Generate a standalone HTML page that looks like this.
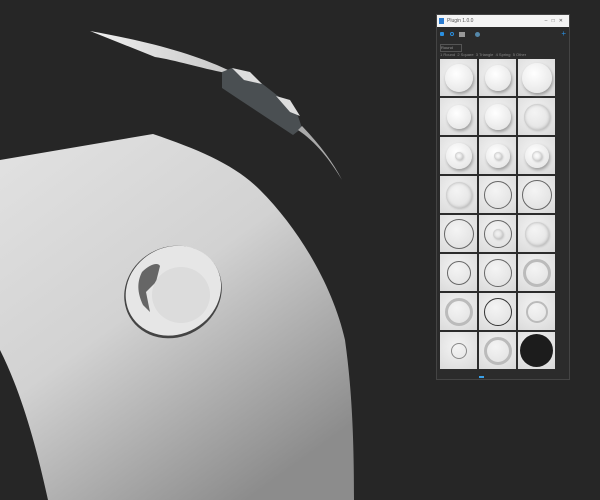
<html><head><style>
body{margin:0;width:600px;height:500px;background:#262626;overflow:hidden;position:relative;font-family:"Liberation Sans",sans-serif}
.p{position:absolute;left:436px;top:14px;width:134px;height:366px;background:#2b2b2b;border:1px solid #444;box-sizing:border-box}
.t{height:12px;background:#f4f4f4;font-size:5px;color:#555;line-height:12px;padding-left:10px;position:relative}
.t b{position:absolute;left:2px;top:3px;width:5px;height:6px;background:#2a7bd0}
.c{position:absolute;width:37px;height:37px;background:radial-gradient(circle at 45% 40%,#f4f4f4,#d8d8d8)}
.c i{position:absolute;border-radius:50%}
</style></head><body>
<svg width="600" height="500" style="position:absolute;left:0;top:0">
<defs><linearGradient id="g" x1="0" y1="0" x2=".7" y2="1"><stop offset="0" stop-color="#e2e2e2"/><stop offset=".5" stop-color="#d2d2d2"/><stop offset="1" stop-color="#8c8c8c"/></linearGradient>
<linearGradient id="s" x1="0" y1="0" x2="1" y2="0"><stop offset="0" stop-color="#f0f0f0"/><stop offset="1" stop-color="#c8c8c8"/></linearGradient></defs>
<path d="M0 160 L153 134 C200 150 235 165 260 190 C300 230 333 287 345 340 C352 390 354 440 354 500 L48 500 C35 440 20 390 0 350 Z" fill="url(#g)"/>
<path d="M90 31 C140 40 190 52 228 70 L226 73 C200 68 175 60 155 57 Z" fill="url(#s)"/>
<path d="M222 72 L232 68 L260 82 L296 110 L302 128 L293 135 L240 100 L222 88 Z" fill="#4a4f52"/>
<path d="M232 68 L250 72 L262 84 L244 80 Z M276 96 L290 100 L300 116 L290 112 Z" fill="#ddd"/>
<path d="M302 126 C320 145 333 162 342 180 C330 160 316 142 298 130 Z" fill="#aaa"/>
<ellipse cx="173" cy="292" rx="50" ry="45" fill="#444" transform="rotate(-30 173 292)"/>
<ellipse cx="174" cy="291" rx="49" ry="43.5" fill="#e6e6e6" transform="rotate(-30 173 292)"/>
<path d="M142 272 C150 264 158 262 160 266 L156 282 L146 292 L150 312 L143 305 C137 292 137 282 142 272 Z" fill="#666"/>
<ellipse cx="181" cy="295" rx="29" ry="28" fill="#dcdcdc"/>
</svg>
<div class="p"><div class="t"><b></b>Plugin 1.0.0<span style="position:absolute;right:6px">–&nbsp;&nbsp;&nbsp;□&nbsp;&nbsp;&nbsp;✕</span></div>
<div style="position:absolute;left:3px;top:17px;width:4px;height:4px;background:#2a8fe0;border-radius:1px"></div>
<div style="position:absolute;left:13px;top:17px;width:4px;height:4px;border:1px solid #2a8fe0;border-radius:50%;box-sizing:border-box"></div>
<div style="position:absolute;left:22px;top:17px;width:6px;height:5px;background:#999"></div>
<div style="position:absolute;left:38px;top:17px;width:5px;height:5px;background:#58a;border-radius:50%"></div>
<div style="position:absolute;right:3px;top:16px;color:#2a8fe0;font-size:8px;line-height:6px">+</div>
<div style="position:absolute;left:3px;top:29px;width:20px;height:6px;border:1px solid #555;font-size:4px;color:#999">Round</div>
<div style="position:absolute;left:3px;top:37px;font-size:4px;color:#888">1 Round &nbsp;2 Square &nbsp;3 Triangle &nbsp;4 Spring &nbsp;5 Other</div>
<div style="position:absolute;left:42px;top:361px;width:5px;height:2px;background:#3aa0e8"></div>
</div>
<div id="grid"></div>
<script>
var D='background:radial-gradient(circle at 40% 35%,#fff,#e0e0e0);box-shadow:1px 2px 3px #999;',
R='border:1.5px solid #666;box-sizing:border-box;',F='box-shadow:inset 0 0 3px #aaa,1px 1px 2px #bbb;',
T='border:3px solid #bbb;box-sizing:border-box;';
function e(s,sz){var o=(37-sz)/2;return '<i style="left:'+o+'px;top:'+o+'px;width:'+sz+'px;height:'+sz+'px;'+s+'"></i>';}
var cells=[[e(D,28),e(D,26),e(D,30)],[e(D,24),e(D,26),e(F,26)],[e(D,26)+e(F,8),e(D,24)+e(F,8),e(D,24)+e(F,10)],
[e(F,26),e(R,28),e(R,30)],[e(R,30),e(R,28)+e(F,10),e(F,24)],[e(R,24),e(R,28),e(T,28)],[e(T,28),e(R+'border-color:#333;',28),e(T+'border-width:2px;',22)],
[e(R+'border-color:#888;',16),e(T,28),e('background:#1c1c1c;',33)]];
var h='';for(var r=0;r<8;r++)for(var c=0;c<3;c++){var x=440+c*39,y=59+r*39;
h+='<div class="c" style="left:'+x+'px;top:'+y+'px">'+cells[r][c]+'</div>';}
document.getElementById('grid').innerHTML=h;
</script>
</body></html>
